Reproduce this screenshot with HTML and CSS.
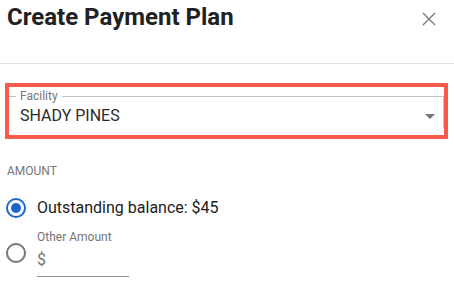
FILE: index.html
```html
<!DOCTYPE html>
<html>
<head>
<meta charset="utf-8">
<link rel="stylesheet" href="styles.css">
</head>
<body>
<div class="dialog">
  <header class="header">
    <h1 class="title">Create Payment Plan</h1>
    <button class="close" aria-label="Close">
      <svg width="24" height="24" viewBox="0 0 24 24"><path d="M18.5 6.4 17.6 5.5 12 11.1 6.4 5.5 5.5 6.4 11.1 12 5.5 17.6 6.4 18.5 12 12.9 17.6 18.5 18.5 17.6 12.9 12z" fill="#757575"/></svg>
    </button>
  </header>
  <div class="content">
    <div class="highlight">
      <fieldset class="field">
        <legend class="field-label">Facility</legend>
        <div class="select">
          <span class="select-value">SHADY PINES</span>
          <span class="arrow"></span>
        </div>
      </fieldset>
    </div>
    <div class="section-label">AMOUNT</div>
    <div class="radio-row">
      <span class="radio checked"></span>
      <span class="radio-text">Outstanding balance: $45</span>
    </div>
    <div class="radio-row">
      <span class="radio"></span>
      <div class="other">
        <div class="other-label">Other Amount</div>
        <div class="other-input"><span class="prefix">$</span></div>
      </div>
    </div>
  </div>
</div>
</body>
</html>
```

FILE: styles.css
```css
* { box-sizing: border-box; }
html, body {
  margin: 0;
  background: #fff;
  font-family: Roboto, "Liberation Sans", sans-serif;
  color: #212121;
}
.dialog { width: 454px; height: 292px; overflow: hidden; }
.header {
  display: flex;
  justify-content: space-between;
  align-items: flex-start;
  height: 64px;
  padding: 3px 13px 0 7px;
  border-bottom: 1px solid #e0e0e0;
}
.title {
  margin: 0;
  font-size: 24px;
  line-height: 28px;
  font-weight: 700;
  color: #212121;
}
.close {
  margin-top: 4px;
  padding: 0;
  border: 0;
  background: none;
  width: 24px;
  height: 24px;
  display: flex;
}
.content { padding: 19px 6px 0 5px; }
.highlight {
  border: 4px solid #f95a4c;
  padding: 2px 0 7px 0;
}
.field {
  margin: 0;
  padding: 0 8px 0 7px;
  border: 1px solid #c4c4c4;
  border-left: 0;
  border-bottom: 0;
  min-width: 0;
}
.field-label {
  padding: 0 4px;
  font-size: 12px;
  line-height: 14px;
  color: #757575;
}
.select {
  display: flex;
  align-items: center;
  justify-content: space-between;
  height: 24px;
  margin-top: 1px;
  padding-left: 4px;
}
.select-value { font-size: 16px; line-height: 24px; color: #2b2b2b; }
.arrow {
  width: 0; height: 0;
  border-left: 5px solid transparent;
  border-right: 5px solid transparent;
  border-top: 5px solid #757575;
  margin-top: 1px;
}
.section-label {
  margin-top: 24px;
  margin-left: 2px;
  font-size: 12px;
  line-height: 16px;
  color: #757575;
}
.radio-row {
  display: flex;
  align-items: center;
  gap: 11px;
  margin-left: 1px;
}
.section-label + .radio-row { margin-top: 17px; }
.radio-row + .radio-row { margin-top: 9px; }
.radio {
  width: 20px; height: 20px;
  border: 2px solid #757575;
  border-radius: 50%;
  flex: none;
  display: flex;
  align-items: center;
  justify-content: center;
}
.radio.checked { border-color: #1b66d0; }
.radio.checked::after {
  content: "";
  width: 10px; height: 10px;
  border-radius: 50%;
  background: #1b66d0;
}
.radio-text { font-size: 16px; line-height: 24px; color: #212121; }
.other-label { font-size: 12px; line-height: 16px; color: #757575; }
.other-input {
  width: 92px;
  height: 32px;
  padding: 3px 0 5px;
  border-bottom: 1px solid #949494;
  font-size: 16px;
  line-height: 24px;
  color: #757575;
}
```
